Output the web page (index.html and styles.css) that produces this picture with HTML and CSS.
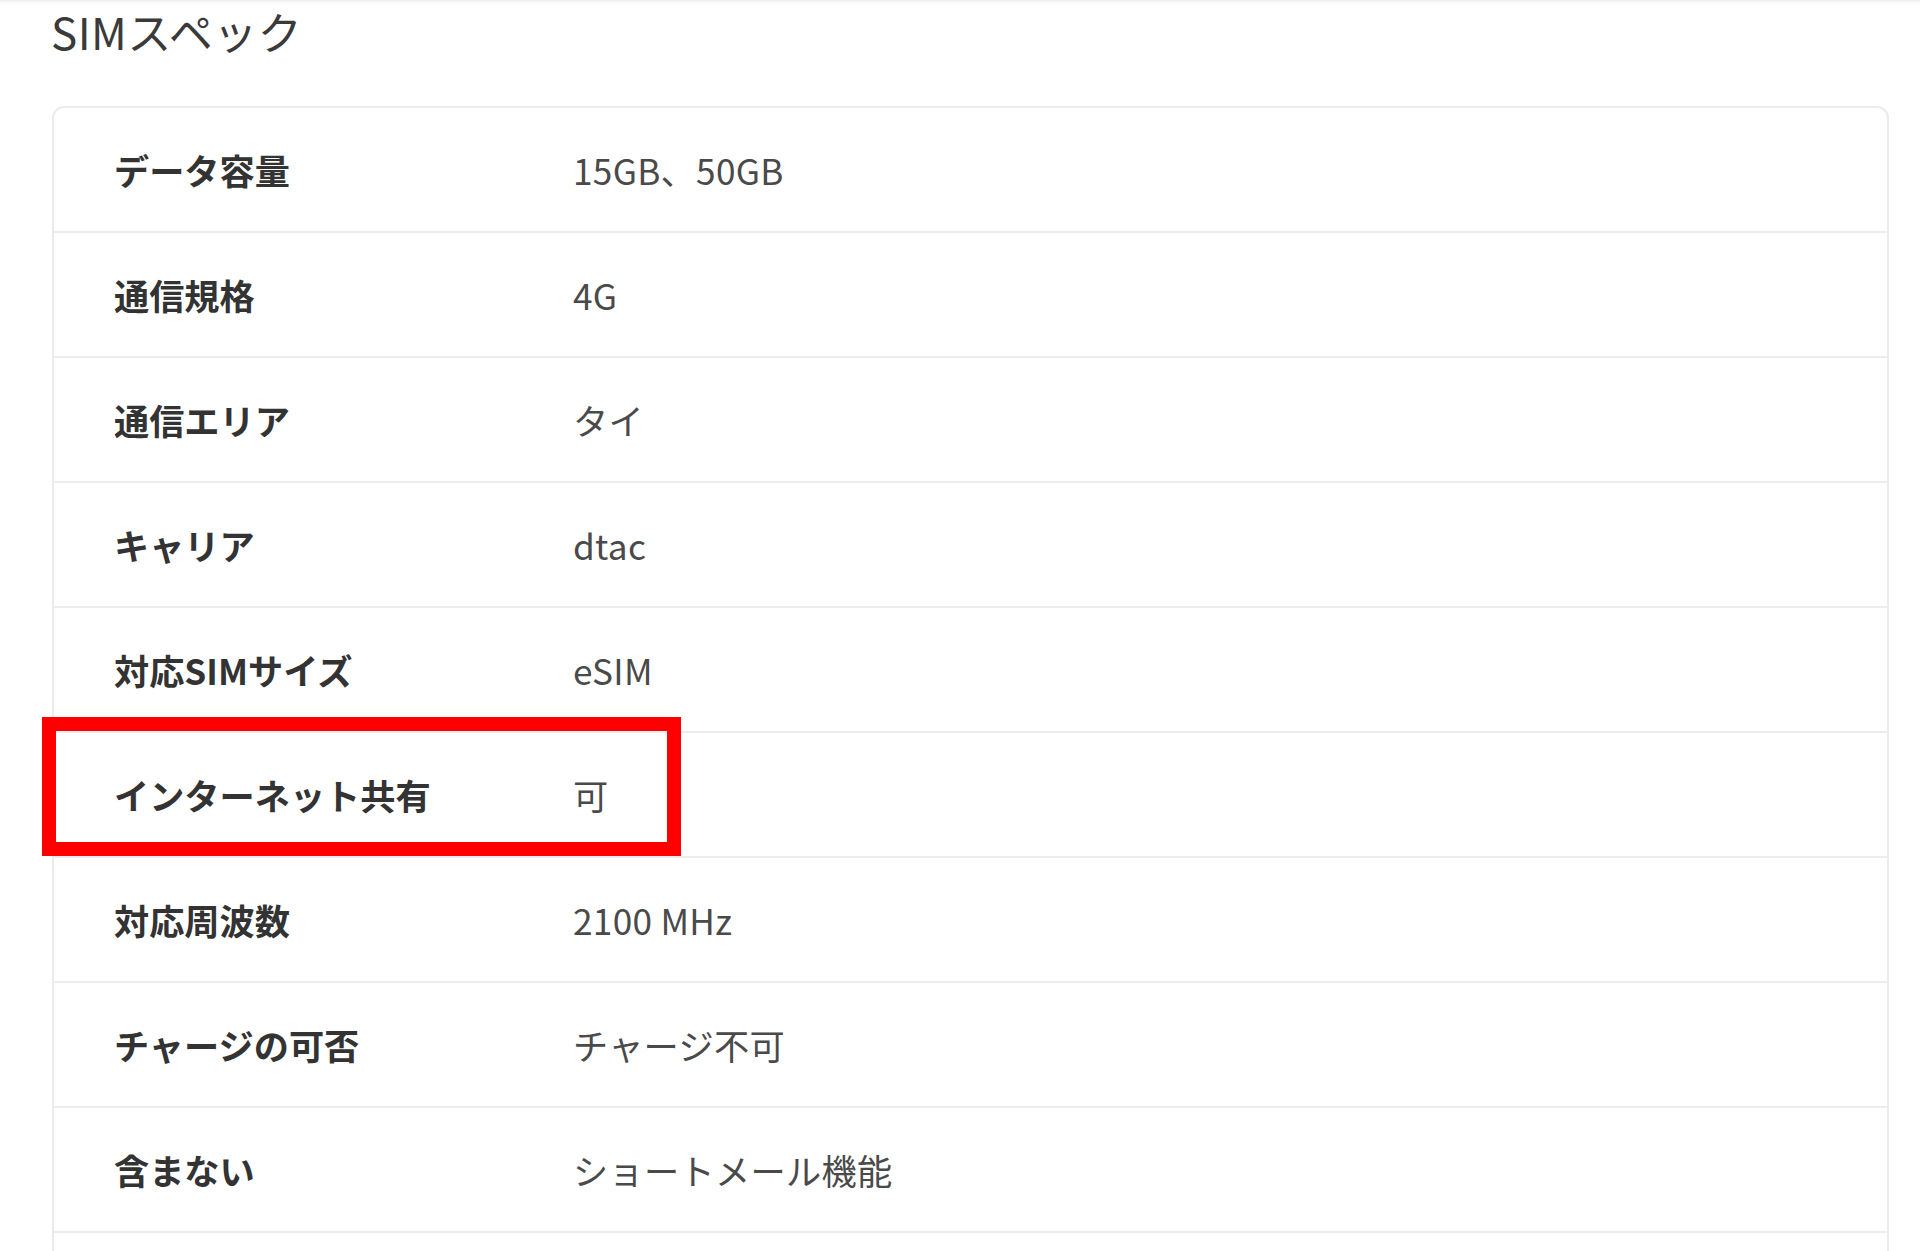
FILE: index.html
```html
<!DOCTYPE html>
<html lang="ja">
<head>
<meta charset="utf-8">
<title>SIMスペック</title>
<link rel="stylesheet" href="styles.css">
</head>
<body>
<main class="page">
  <h2 class="title">SIMスペック</h2>
  <div class="spec-card">
    <div class="spec-row"><div class="spec-label">データ容量</div><div class="spec-value">15GB、50GB</div></div>
    <div class="spec-row"><div class="spec-label">通信規格</div><div class="spec-value">4G</div></div>
    <div class="spec-row"><div class="spec-label">通信エリア</div><div class="spec-value">タイ</div></div>
    <div class="spec-row"><div class="spec-label">キャリア</div><div class="spec-value">dtac</div></div>
    <div class="spec-row"><div class="spec-label">対応SIMサイズ</div><div class="spec-value">eSIM</div></div>
    <div class="spec-row is-marked"><div class="spec-label">インターネット共有</div><div class="spec-value">可</div><span class="mark-box"></span></div>
    <div class="spec-row"><div class="spec-label">対応周波数</div><div class="spec-value">2100 MHz</div></div>
    <div class="spec-row"><div class="spec-label">チャージの可否</div><div class="spec-value">チャージ不可</div></div>
    <div class="spec-row"><div class="spec-label">含まない</div><div class="spec-value">ショートメール機能</div></div>
    <div class="spec-row"><div class="spec-label"></div><div class="spec-value"></div></div>
  </div>
</main>
</body>
</html>
```

FILE: styles.css
```css
html, body {
  margin: 0;
  padding: 0;
}
body {
  background-color: #fff;
  background-image: linear-gradient(to bottom, #ededed 0, #f7f7f7 2px, #fff 5px);
  background-repeat: no-repeat;
  background-size: 100% 6px;
  font-family: "Noto Sans CJK JP", "Noto Sans", sans-serif;
  color: #333;
  overflow: hidden;
}
.page {
  padding: 0 31px 0 51px;
}
.title {
  margin: 5px 0 49px 0;
  font-size: 44px;
  line-height: 52px;
  font-weight: 400;
  color: #3a3a3a;
  letter-spacing: 0.5px;
}
.spec-card {
  margin-left: 1px;
  border: 2px solid #ececec;
  border-bottom: none;
  border-radius: 12px 12px 0 0;
}
.spec-row {
  position: relative;
  display: flex;
  align-items: center;
  height: 123px;
  padding-left: 60px;
  border-bottom: 2px solid #ededed;
}
.spec-label {
  width: 459px;
  flex: none;
  font-size: 35.2px;
  font-weight: 700;
  color: #333;
}
.spec-value {
  font-size: 35.2px;
  font-weight: 400;
  color: #4a4a4a;
  letter-spacing: 0.3px;
}
.mark-box {
  position: absolute;
  left: -12px;
  top: -16px;
  width: 639px;
  height: 139px;
  box-sizing: border-box;
  border: 14px solid #ff0000;
  pointer-events: none;
}
```
